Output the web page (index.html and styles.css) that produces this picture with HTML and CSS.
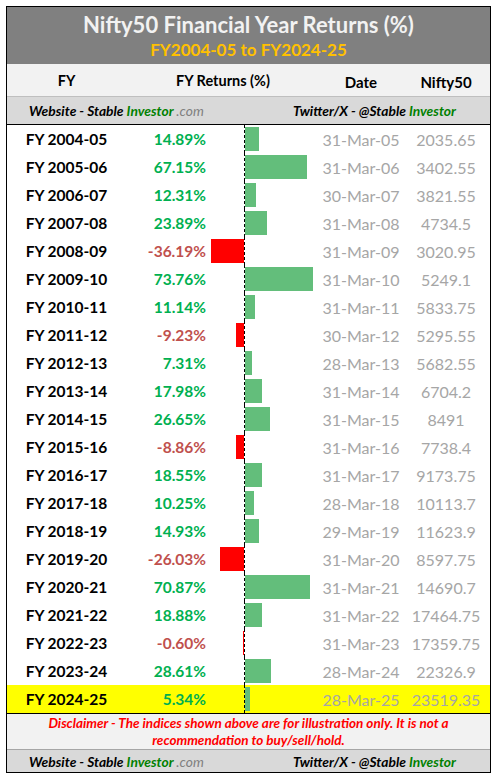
FILE: index.html
```html
<!DOCTYPE html>
<html>
<head>
<meta charset="utf-8">
<link rel="stylesheet" href="styles.css">
</head>
<body>
<div class="sheet">
  <div class="title">
    <div class="t1">Nifty50 Financial Year Returns (%)</div>
    <div class="t2">FY2004-05 to FY2024-25</div>
  </div>
  <div class="cols head">
    <div class="h-fy">FY</div>
    <div class="h-ret">FY Returns (%)</div>
    <div class="h-date">Date</div>
    <div class="h-nifty">Nifty50</div>
  </div>
  <div class="social top">
    <div class="site">Website - Stable <span class="g">Investor</span> <span class="d">.com</span></div>
    <div class="tw">Twitter/X - @Stable <span class="g">Investor</span></div>
  </div>
  <div class="data">
    <div class="cols row"><div class="c-fy">FY 2004-05</div><div class="c-ret pos">14.89%</div><div class="c-bar"><div class="neg-half"></div><div class="pos-half"><div class="bar gbar" style="width:13.7px"></div></div></div><div class="c-date">31-Mar-05</div><div class="c-nifty">2035.65</div></div>
    <div class="cols row"><div class="c-fy">FY 2005-06</div><div class="c-ret pos">67.15%</div><div class="c-bar"><div class="neg-half"></div><div class="pos-half"><div class="bar gbar" style="width:61.8px"></div></div></div><div class="c-date">31-Mar-06</div><div class="c-nifty">3402.55</div></div>
    <div class="cols row"><div class="c-fy">FY 2006-07</div><div class="c-ret pos">12.31%</div><div class="c-bar"><div class="neg-half"></div><div class="pos-half"><div class="bar gbar" style="width:11.3px"></div></div></div><div class="c-date">30-Mar-07</div><div class="c-nifty">3821.55</div></div>
    <div class="cols row"><div class="c-fy">FY 2007-08</div><div class="c-ret pos">23.89%</div><div class="c-bar"><div class="neg-half"></div><div class="pos-half"><div class="bar gbar" style="width:22px"></div></div></div><div class="c-date">31-Mar-08</div><div class="c-nifty">4734.5</div></div>
    <div class="cols row"><div class="c-fy">FY 2008-09</div><div class="c-ret neg">-36.19%</div><div class="c-bar"><div class="neg-half"><div class="bar rbar" style="width:33.3px"></div></div><div class="pos-half"></div></div><div class="c-date">31-Mar-09</div><div class="c-nifty">3020.95</div></div>
    <div class="cols row"><div class="c-fy">FY 2009-10</div><div class="c-ret pos">73.76%</div><div class="c-bar"><div class="neg-half"></div><div class="pos-half"><div class="bar gbar" style="width:67.9px"></div></div></div><div class="c-date">31-Mar-10</div><div class="c-nifty">5249.1</div></div>
    <div class="cols row"><div class="c-fy">FY 2010-11</div><div class="c-ret pos">11.14%</div><div class="c-bar"><div class="neg-half"></div><div class="pos-half"><div class="bar gbar" style="width:10.2px"></div></div></div><div class="c-date">31-Mar-11</div><div class="c-nifty">5833.75</div></div>
    <div class="cols row"><div class="c-fy">FY 2011-12</div><div class="c-ret neg">-9.23%</div><div class="c-bar"><div class="neg-half"><div class="bar rbar" style="width:8.5px"></div></div><div class="pos-half"></div></div><div class="c-date">30-Mar-12</div><div class="c-nifty">5295.55</div></div>
    <div class="cols row"><div class="c-fy">FY 2012-13</div><div class="c-ret pos">7.31%</div><div class="c-bar"><div class="neg-half"></div><div class="pos-half"><div class="bar gbar" style="width:6.7px"></div></div></div><div class="c-date">28-Mar-13</div><div class="c-nifty">5682.55</div></div>
    <div class="cols row"><div class="c-fy">FY 2013-14</div><div class="c-ret pos">17.98%</div><div class="c-bar"><div class="neg-half"></div><div class="pos-half"><div class="bar gbar" style="width:16.5px"></div></div></div><div class="c-date">31-Mar-14</div><div class="c-nifty">6704.2</div></div>
    <div class="cols row"><div class="c-fy">FY 2014-15</div><div class="c-ret pos">26.65%</div><div class="c-bar"><div class="neg-half"></div><div class="pos-half"><div class="bar gbar" style="width:24.5px"></div></div></div><div class="c-date">31-Mar-15</div><div class="c-nifty">8491</div></div>
    <div class="cols row"><div class="c-fy">FY 2015-16</div><div class="c-ret neg">-8.86%</div><div class="c-bar"><div class="neg-half"><div class="bar rbar" style="width:8.2px"></div></div><div class="pos-half"></div></div><div class="c-date">31-Mar-16</div><div class="c-nifty">7738.4</div></div>
    <div class="cols row"><div class="c-fy">FY 2016-17</div><div class="c-ret pos">18.55%</div><div class="c-bar"><div class="neg-half"></div><div class="pos-half"><div class="bar gbar" style="width:17.1px"></div></div></div><div class="c-date">31-Mar-17</div><div class="c-nifty">9173.75</div></div>
    <div class="cols row"><div class="c-fy">FY 2017-18</div><div class="c-ret pos">10.25%</div><div class="c-bar"><div class="neg-half"></div><div class="pos-half"><div class="bar gbar" style="width:9.4px"></div></div></div><div class="c-date">28-Mar-18</div><div class="c-nifty">10113.7</div></div>
    <div class="cols row"><div class="c-fy">FY 2018-19</div><div class="c-ret pos">14.93%</div><div class="c-bar"><div class="neg-half"></div><div class="pos-half"><div class="bar gbar" style="width:13.7px"></div></div></div><div class="c-date">29-Mar-19</div><div class="c-nifty">11623.9</div></div>
    <div class="cols row"><div class="c-fy">FY 2019-20</div><div class="c-ret neg">-26.03%</div><div class="c-bar"><div class="neg-half"><div class="bar rbar" style="width:23.9px"></div></div><div class="pos-half"></div></div><div class="c-date">31-Mar-20</div><div class="c-nifty">8597.75</div></div>
    <div class="cols row"><div class="c-fy">FY 2020-21</div><div class="c-ret pos">70.87%</div><div class="c-bar"><div class="neg-half"></div><div class="pos-half"><div class="bar gbar" style="width:65.2px"></div></div></div><div class="c-date">31-Mar-21</div><div class="c-nifty">14690.7</div></div>
    <div class="cols row"><div class="c-fy">FY 2021-22</div><div class="c-ret pos">18.88%</div><div class="c-bar"><div class="neg-half"></div><div class="pos-half"><div class="bar gbar" style="width:17.4px"></div></div></div><div class="c-date">31-Mar-22</div><div class="c-nifty">17464.75</div></div>
    <div class="cols row"><div class="c-fy">FY 2022-23</div><div class="c-ret neg">-0.60%</div><div class="c-bar"><div class="neg-half"><div class="bar rbar" style="width:1px"></div></div><div class="pos-half"></div></div><div class="c-date">31-Mar-23</div><div class="c-nifty">17359.75</div></div>
    <div class="cols row"><div class="c-fy">FY 2023-24</div><div class="c-ret pos">28.61%</div><div class="c-bar"><div class="neg-half"></div><div class="pos-half"><div class="bar gbar" style="width:26.3px"></div></div></div><div class="c-date">28-Mar-24</div><div class="c-nifty">22326.9</div></div>
    <div class="cols row last"><div class="c-fy">FY 2024-25</div><div class="c-ret pos">5.34%</div><div class="c-bar"><div class="neg-half"></div><div class="pos-half"><div class="bar gbar" style="width:4.9px"></div></div></div><div class="c-date">28-Mar-25</div><div class="c-nifty">23519.35</div></div>
  </div>
  <div class="disclaimer">Disclaimer - The indices shown above are for illustration only. It is not a<br>recommendation to buy/sell/hold.</div>
  <div class="social bottom">
    <div class="site">Website - Stable <span class="g">Investor</span> <span class="d">.com</span></div>
    <div class="tw">Twitter/X - @Stable <span class="g">Investor</span></div>
  </div>
</div>
</body>
</html>
```
FILE: styles.css
```css
html, body {
  margin: 0;
  padding: 0;
  background: #ffffff;
}
body {
  padding: 6px 0 0 6px;
  font-family: Lato, "Liberation Sans", sans-serif;
}
.sheet {
  width: 485px;
  box-sizing: border-box;
  border: 1px solid #000;
  display: flex;
  flex-direction: column;
}
.title {
  height: 57px;
  background: #808080;
  display: flex;
  flex-direction: column;
  align-items: center;
  justify-content: center;
  gap: 2px;
}
.t1 {
  color: #f2f2f2;
  font-weight: 700;
  font-size: 22px;
  line-height: 26px;
}
.t2 {
  color: #ffc000;
  font-weight: 700;
  font-size: 17px;
  line-height: 20px;
}
.cols {
  display: grid;
  grid-template-columns: 119px 82px 112px 82px 88px;
  align-items: center;
}
.head {
  height: 33px;
  box-sizing: border-box;
  background: #f2f2f2;
  border-bottom: 1px solid #bfbfbf;
  font-weight: 700;
  font-size: 14.5px;
  color: #000;
  text-align: center;
}
.head .h-ret {
  grid-column: 2 / 4;
}
.h-date, .h-nifty {
  font-size: 15px;
  padding-top: 3px;
}
.c-fy { text-align: center; }
.c-date { text-align: center; }
.c-nifty { text-align: center; }
.social {
  display: grid;
  grid-template-columns: 286px 1fr;
  align-items: center;
  background: #d9d9d9;
  font-style: italic;
  font-weight: 700;
  font-size: 13.8px;
  color: #000;
  box-sizing: border-box;
}
.social.top {
  height: 28px;
  border-bottom: 1px solid #000;
}
.social.bottom {
  height: 22px;
}
.site { padding-left: 22px; }
.social .g { color: #008000; }
.social .d { color: #808080; font-weight: 400; }
.data {
  display: flex;
  flex-direction: column;
}
.row {
  height: 28px;
  font-size: 15.5px;
}
.row .c-fy {
  font-weight: 700;
  color: #000;
}
.c-ret {
  text-align: right;
  font-weight: 700;
  padding-right: 2px;
}
.pos { color: #00b050; }
.neg { color: #c0504d; }
.c-date, .c-nifty {
  color: #a6a6a6;
  font-size: 16px;
}
.c-bar {
  align-self: stretch;
  display: grid;
  grid-template-columns: 36px 1fr;
}
.neg-half {
  display: flex;
  justify-content: flex-end;
  padding: 2px 0;
}
.pos-half {
  display: flex;
  justify-content: flex-start;
  padding: 2px 0;
  border-left: 1px dashed #000;
}
.bar { height: 24px; }
.gbar { background: #63be7b; }
.rbar { background: #ff0000; }
.row.last { background: #ffff00; }
.data .row.last { border-bottom: 1px solid #000; height: 29px; box-sizing: border-box; }
.disclaimer {
  height: 36px;
  box-sizing: border-box;
  background: #f2f2f2;
  border-bottom: 1px solid #a6a6a6;
  color: #ff0000;
  font-style: italic;
  font-weight: 700;
  font-size: 13.5px;
  line-height: 17px;
  text-align: center;
  padding-top: 1px;
}
```
